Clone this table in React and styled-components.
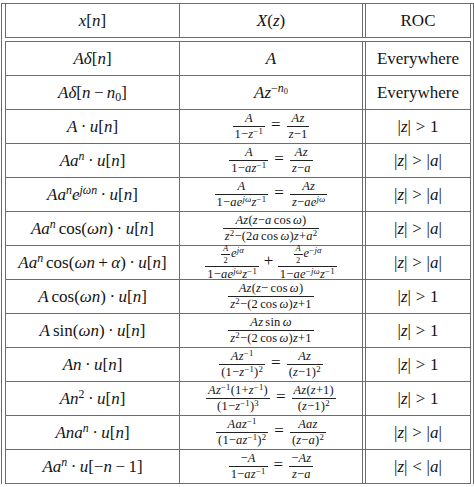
import React from 'react';
import styled, { createGlobalStyle } from 'styled-components';

const LINE = '#6c6c6c';
const SERIF = '"Liberation Serif", "Times New Roman", serif';

const GlobalStyle = createGlobalStyle`
  html, body {
    margin: 0;
    padding: 0;
    background: #ffffff;
  }
  body {
    font-family: ${SERIF};
    color: #141414;
  }
`;

const Table = styled.div`
  box-sizing: border-box;
  width: 473px;
  margin: 3px 0 0 1px;
  padding: 0 2px 0 3px;
  border: 1px solid ${LINE};
  border-bottom: none;
  font-family: ${SERIF};
`;

const Section = styled.div`
  border-left: 1px solid ${LINE};
  border-right: 1px solid ${LINE};
  border-top: ${p => (p.$body ? `1px solid ${LINE}` : 'none')};
  margin-top: ${p => (p.$body ? '3px' : '0')};
`;

const Row = styled.div`
  display: flex;
  height: 33px;
  border-bottom: 1px solid ${LINE};
`;

const Cell = styled.div`
  box-sizing: border-box;
  display: flex;
  align-items: center;
  justify-content: center;
  width: ${p => p.$width}px;
  border-right: ${p => (p.$last ? 'none' : `1px solid ${LINE}`)};
  ${p => p.$last && `
    flex: 1;
    margin-left: 2px;
    border-left: 1px solid ${LINE};
  `}
`;

const Formula = styled.span`
  display: inline-block;
  white-space: nowrap;
  font-family: ${SERIF};
  font-size: 17px;
  line-height: 1;
  color: #141414;
`;

const V = styled.i`
  font-style: italic;
`;

const Op = styled.span`
  margin: 0 0.2em;
`;

const Rel = styled.span`
  margin: 0 0.28em;
`;

const Fn = styled.span`
  margin-left: 0.17em;
  margin-right: ${p => (p.$space ? '0.17em' : '0')};
`;

const Sup = styled.sup`
  font-size: 0.7em;
  line-height: 0;
  vertical-align: 0.5em;
`;

const Sub = styled.sub`
  font-size: 0.7em;
  line-height: 0;
  vertical-align: -0.25em;
`;

const FracBox = styled.span`
  display: inline-flex;
  flex-direction: column;
  align-items: stretch;
  vertical-align: middle;
  font-size: ${p => (p.$small ? '8.5px' : '12.5px')};
  letter-spacing: ${p => (p.$small ? '0' : '0.2px')};
  line-height: 1.02;
  margin: 0 0.1em;
`;

const Num = styled.span`
  text-align: center;
  padding: 0 2px 1px;
`;

const Den = styled.span`
  text-align: center;
  border-top: 1px solid #222;
  padding: 1px 2px 0;
`;

const Frac = ({ num, den, small }) => (
  <FracBox $small={small}>
    <Num>{num}</Num>
    <Den>{den}</Den>
  </FracBox>
);

const zi = <><V>z</V><Sup>−1</Sup></>;
const un = <><Op>·</Op><V>u</V>[<V>n</V>]</>;
const gtOne = <>|<V>z</V>|<Rel>&gt;</Rel>1</>;
const gtA = <>|<V>z</V>|<Rel>&gt;</Rel>|<V>a</V>|</>;
const an = <><V>Aa</V><Sup><V>n</V></Sup></>;
const cosDen = <><V>z</V><Sup>2</Sup>−(2<Fn $space>cos</Fn><V>ω</V>)<V>z</V>+1</>;

const rows = [
  {
    x: <><V>A</V><V>δ</V>[<V>n</V>]</>,
    X: <V>A</V>,
    roc: 'Everywhere',
  },
  {
    x: <><V>A</V><V>δ</V>[<V>n</V><Op>−</Op><V>n</V><Sub>0</Sub>]</>,
    X: <><V>Az</V><Sup>−<V>n</V><Sub>0</Sub></Sup></>,
    roc: 'Everywhere',
  },
  {
    x: <><V>A</V>{un}</>,
    X: <><Frac num={<V>A</V>} den={<>1−{zi}</>} /><Rel>=</Rel><Frac num={<V>Az</V>} den={<><V>z</V>−1</>} /></>,
    roc: gtOne,
  },
  {
    x: <>{an}{un}</>,
    X: <><Frac num={<V>A</V>} den={<>1−<V>a</V>{zi}</>} /><Rel>=</Rel><Frac num={<V>Az</V>} den={<><V>z</V>−<V>a</V></>} /></>,
    roc: gtA,
  },
  {
    x: <>{an}<V>e</V><Sup><V>jωn</V></Sup>{un}</>,
    X: <><Frac num={<V>A</V>} den={<>1−<V>ae</V><Sup><V>jω</V></Sup>{zi}</>} /><Rel>=</Rel><Frac num={<V>Az</V>} den={<><V>z</V>−<V>ae</V><Sup><V>jω</V></Sup></>} /></>,
    roc: gtA,
  },
  {
    x: <>{an}<Fn>cos</Fn>(<V>ωn</V>){un}</>,
    X: <Frac num={<><V>Az</V>(<V>z</V>−<V>a</V><Fn $space>cos</Fn><V>ω</V>)</>} den={<><V>z</V><Sup>2</Sup>−(2<V>a</V><Fn $space>cos</Fn><V>ω</V>)<V>z</V>+<V>a</V><Sup>2</Sup></>} />,
    roc: gtA,
  },
  {
    x: <>{an}<Fn>cos</Fn>(<V>ωn</V><Op>+</Op><V>α</V>){un}</>,
    X: (
      <>
        <Frac
          num={<><Frac small num={<V>A</V>} den="2" /><V>e</V><Sup><V>jα</V></Sup></>}
          den={<>1−<V>ae</V><Sup><V>jω</V></Sup>{zi}</>}
        />
        <Op>+</Op>
        <Frac
          num={<><Frac small num={<V>A</V>} den="2" /><V>e</V><Sup>−<V>jα</V></Sup></>}
          den={<>1−<V>ae</V><Sup>−<V>jω</V></Sup>{zi}</>}
        />
      </>
    ),
    roc: gtA,
  },
  {
    x: <><V>A</V><Fn>cos</Fn>(<V>ωn</V>){un}</>,
    X: <Frac num={<><V>Az</V>(<V>z</V>−<Fn $space>cos</Fn><V>ω</V>)</>} den={cosDen} />,
    roc: gtOne,
  },
  {
    x: <><V>A</V><Fn>sin</Fn>(<V>ωn</V>){un}</>,
    X: <Frac num={<><V>Az</V><Fn $space>sin</Fn><V>ω</V></>} den={cosDen} />,
    roc: gtOne,
  },
  {
    x: <><V>An</V>{un}</>,
    X: <><Frac num={<><V>A</V>{zi}</>} den={<>(1−{zi})<Sup>2</Sup></>} /><Rel>=</Rel><Frac num={<V>Az</V>} den={<>(<V>z</V>−1)<Sup>2</Sup></>} /></>,
    roc: gtOne,
  },
  {
    x: <><V>An</V><Sup>2</Sup>{un}</>,
    X: <><Frac num={<><V>A</V>{zi}(1+{zi})</>} den={<>(1−{zi})<Sup>3</Sup></>} /><Rel>=</Rel><Frac num={<><V>Az</V>(<V>z</V>+1)</>} den={<>(<V>z</V>−1)<Sup>2</Sup></>} /></>,
    roc: gtOne,
  },
  {
    x: <><V>Ana</V><Sup><V>n</V></Sup>{un}</>,
    X: <><Frac num={<><V>Aa</V>{zi}</>} den={<>(1−<V>a</V>{zi})<Sup>2</Sup></>} /><Rel>=</Rel><Frac num={<V>Aaz</V>} den={<>(<V>z</V>−<V>a</V>)<Sup>2</Sup></>} /></>,
    roc: gtA,
  },
  {
    x: <>{an}<Op>·</Op><V>u</V>[−<V>n</V><Op>−</Op>1]</>,
    X: <><Frac num={<>−<V>A</V></>} den={<>1−<V>a</V>{zi}</>} /><Rel>=</Rel><Frac num={<>−<V>Az</V></>} den={<><V>z</V>−<V>a</V></>} /></>,
    roc: <>|<V>z</V>|<Rel>&lt;</Rel>|<V>a</V>|</>,
  },
];

const Line = ({ x, X, roc }) => (
  <Row>
    <Cell $width={174}><Formula>{x}</Formula></Cell>
    <Cell $width={183}><Formula>{X}</Formula></Cell>
    <Cell $last><Formula>{roc}</Formula></Cell>
  </Row>
);

export default function App() {
  return (
    <>
      <GlobalStyle />
      <Table>
        <Section>
          <Line x={<><V>x</V>[<V>n</V>]</>} X={<><V>X</V>(<V>z</V>)</>} roc="ROC" />
        </Section>
        <Section $body>
          {rows.map((r, i) => (
            <Line key={i} {...r} />
          ))}
        </Section>
      </Table>
    </>
  );
}
